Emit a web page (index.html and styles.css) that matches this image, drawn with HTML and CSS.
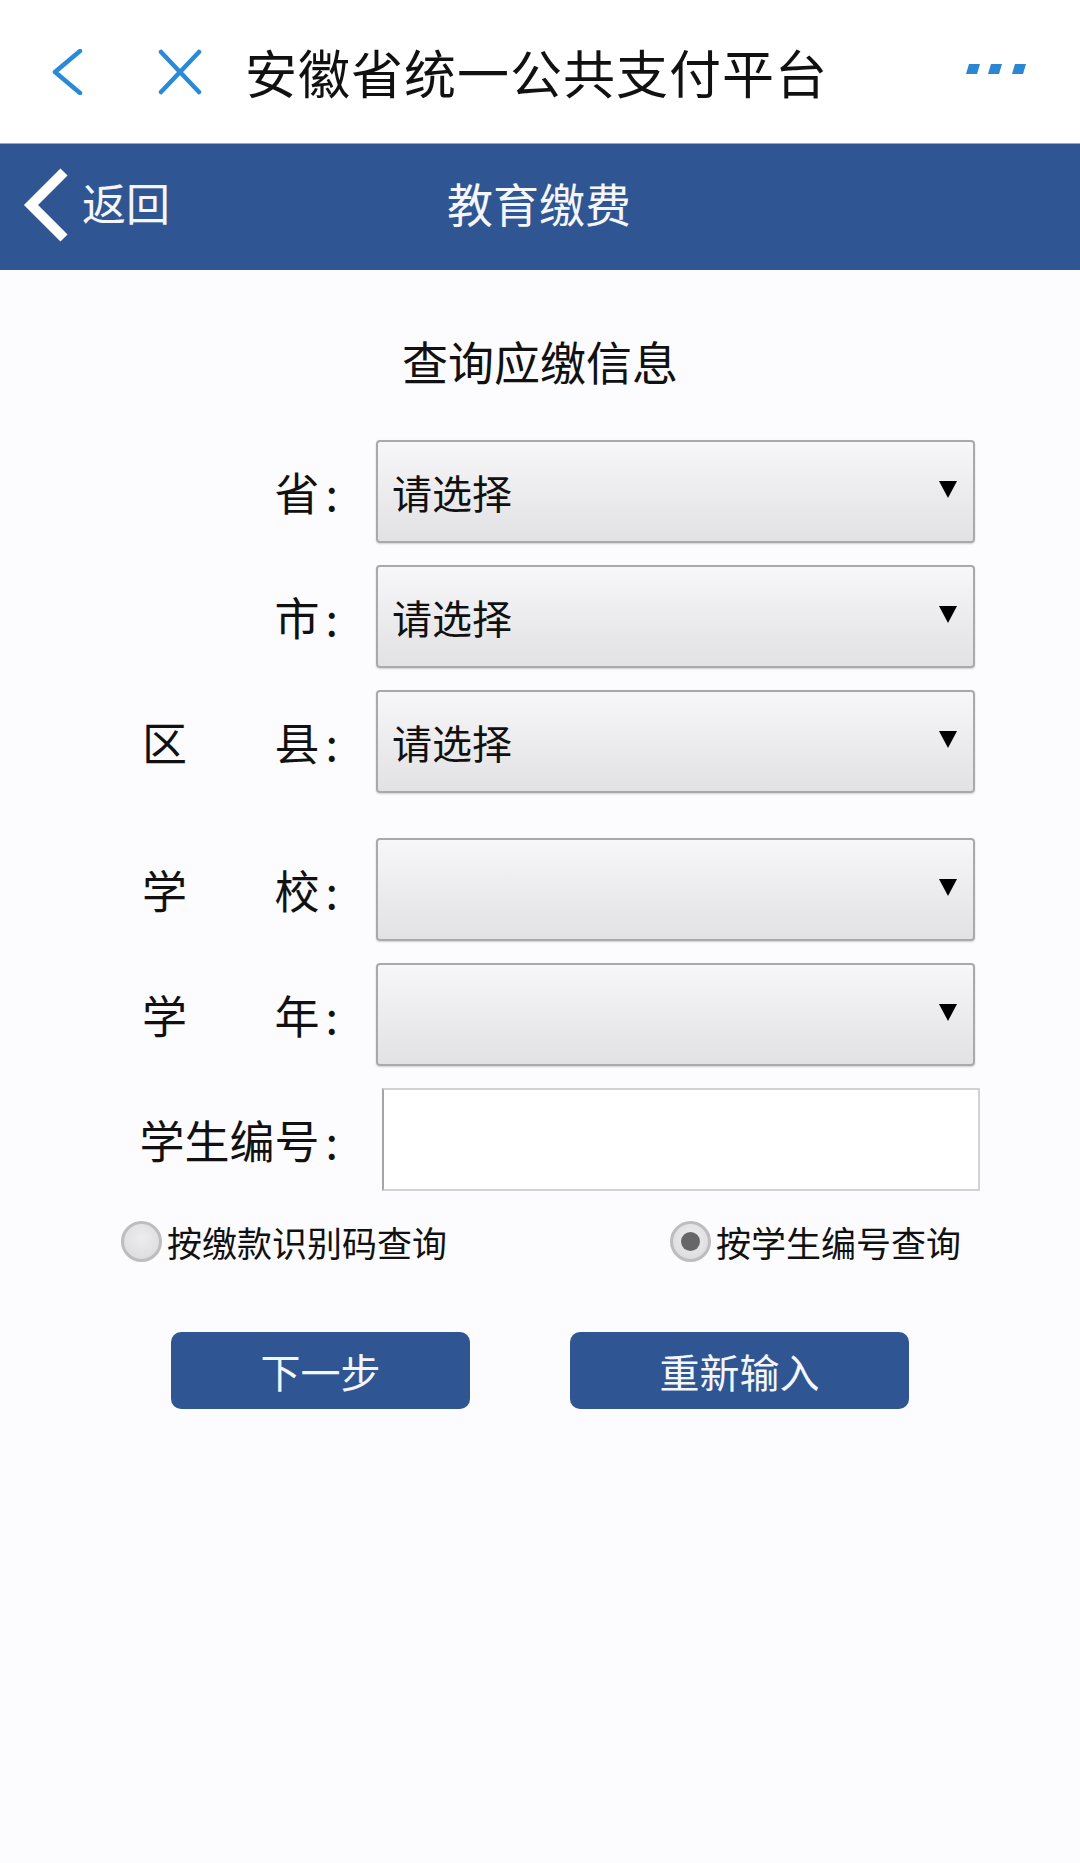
FILE: index.html
```html
<!DOCTYPE html>
<html lang="zh-CN">

<head>
    <meta charset="UTF-8">
    <meta name="viewport" content="width=device-width, initial-scale=1.0">
    <title>教育缴费</title>
    <link rel="stylesheet" href="styles.css">
</head>

<body>
    <header class="topbar">
        <span class="ico-back">
            <svg width="32" height="46" viewBox="0 0 32 46"><polyline points="29,2 4,23 29,44" fill="none" stroke="#2b8ad8" stroke-width="4.5" stroke-linecap="round" stroke-linejoin="round"/></svg>
        </span>
        <span class="ico-close">
            <svg width="44" height="46" viewBox="0 0 44 46"><path d="M3 3 L41 43 M41 3 L3 43" fill="none" stroke="#2b8ad8" stroke-width="4.5" stroke-linecap="round"/></svg>
        </span>
        <h1 class="app-title">安徽省统一公共支付平台</h1>
        <span class="ico-more">
            <svg width="62" height="10" viewBox="0 0 62 10"><polygon points="0,10 3,0 14,0 11,10" fill="#2b86d4"/><polygon points="22,10 25,0 36,0 33,10" fill="#2b86d4"/><polygon points="46,10 49,0 60,0 57,10" fill="#2b86d4"/></svg>
        </span>
    </header>

    <nav class="navbar">
        <a class="nav-back" href="#">
            <svg width="48" height="74" viewBox="0 0 48 74"><polyline points="42,4 9,37 42,70" fill="none" stroke="#fff" stroke-width="10"/></svg>
            <span>返回</span>
        </a>
        <h2 class="nav-title">教育缴费</h2>
        <span></span>
    </nav>

    <main class="form">
        <h3 class="form-title">查询应缴信息</h3>

        <div class="row">
            <label class="label">省<span class="colon">:</span></label>
            <div class="select"><span>请选择</span><i class="caret"></i></div>
        </div>
        <div class="row">
            <label class="label">市<span class="colon">:</span></label>
            <div class="select"><span>请选择</span><i class="caret"></i></div>
        </div>
        <div class="row">
            <label class="label spread"><span>区</span><span>县<span class="colon">:</span></span></label>
            <div class="select"><span>请选择</span><i class="caret"></i></div>
        </div>
        <div class="row row-gap">
            <label class="label spread"><span>学</span><span>校<span class="colon">:</span></span></label>
            <div class="select"><span></span><i class="caret"></i></div>
        </div>
        <div class="row">
            <label class="label spread"><span>学</span><span>年<span class="colon">:</span></span></label>
            <div class="select"><span></span><i class="caret"></i></div>
        </div>
        <div class="row row-input">
            <label class="label wide">学生编号<span class="colon">:</span></label>
            <input class="text-input" type="text">
        </div>

        <div class="radios">
            <label class="radio"><i class="dot"></i>按缴款识别码查询</label>
            <label class="radio checked"><i class="dot"></i>按学生编号查询</label>
        </div>

        <div class="buttons">
            <button class="btn btn-next">下一步</button>
            <button class="btn btn-reset">重新输入</button>
        </div>
    </main>
</body>

</html>
```

FILE: styles.css
```css
* {
    margin: 0;
    padding: 0;
    box-sizing: border-box;
}

body {
    width: 1080px;
    min-height: 1863px;
    background-color: #fcfcfe;
    font-family: "Noto Sans CJK SC", "Noto Sans", sans-serif;
    color: #111;
}

/* top app bar */
.topbar {
    height: 143px;
    background-color: #fff;
    display: flex;
    align-items: center;
    padding-left: 51px;
    padding-right: 52px;
}

.topbar svg {
    display: block;
}

.ico-close {
    margin-left: 75px;
}

.app-title {
    margin-left: 43px;
    font-size: 52px;
    font-weight: 400;
    line-height: 1;
    color: #111;
    letter-spacing: 1px;
}

.ico-more {
    margin-left: auto;
    margin-top: -6px;
}

/* blue nav */
.navbar {
    height: 127px;
    background-color: #2f5592;
    border-top: 1px solid #8fa9cc;
    display: grid;
    grid-template-columns: 1fr auto 1fr;
    align-items: center;
    padding-bottom: 10px;
    color: #f4f6fa;
}

.nav-back {
    display: flex;
    align-items: center;
    padding-left: 22px;
    color: #f4f6fa;
    text-decoration: none;
    font-size: 44px;
}

.nav-back svg {
    display: block;
    margin-right: 12px;
    margin-top: 6px;
}

.nav-title {
    font-size: 46px;
    font-weight: 400;
    margin-left: -2px;
}

/* form */
.form {
    padding-top: 62px;
}

.form-title {
    text-align: center;
    font-size: 46px;
    font-weight: 400;
    line-height: 56px;
    margin-bottom: 52px;
}

.row {
    display: flex;
    align-items: center;
    padding-left: 138px;
    margin-bottom: 22px;
}

.row-gap {
    margin-top: 45px;
}

.label {
    width: 200px;
    margin-right: 38px;
    font-size: 45px;
    text-align: right;
    line-height: 1;
    color: #111;
}

.colon {
    margin-left: 6px;
}

.label.spread {
    display: flex;
    justify-content: space-between;
    padding-left: 4px;
}

.label.wide {
    font-size: 45px;
    margin-right: 44px;
    white-space: nowrap;
}

.select {
    width: 599px;
    height: 103px;
    border: 2px solid #a9a9ab;
    border-radius: 4px;
    background: linear-gradient(#f7f7f9, #ececee 50%, #e2e2e4);
    box-shadow: 0 1px 2px rgba(0, 0, 0, 0.18);
    display: flex;
    align-items: center;
    justify-content: space-between;
    padding-left: 14px;
    padding-right: 16px;
    font-size: 40px;
    color: #111;
}

.caret {
    width: 0;
    height: 0;
    border-left: 9px solid transparent;
    border-right: 9px solid transparent;
    border-top: 17px solid #000;
    margin-top: -4px;
}

.text-input {
    width: 598px;
    height: 103px;
    border: 2px solid #d2d2d4;
    border-left-color: #a6a6a8;
    background-color: #fff;
    outline: none;
}

/* radios */
.radios {
    display: flex;
    align-items: center;
    padding-left: 121px;
    margin-top: 28px;
    height: 44px;
}

.radio {
    display: flex;
    align-items: center;
    font-size: 35px;
    line-height: 1;
    color: #111;
}

.radio.checked {
    margin-left: 223px;
}

.dot {
    width: 41px;
    height: 41px;
    border-radius: 50%;
    border: 3px solid #bdbdbf;
    background: radial-gradient(circle at 50% 40%, #ededef, #d9d9db);
    margin-right: 5px;
    display: flex;
    align-items: center;
    justify-content: center;
}

.radio.checked .dot::after {
    content: "";
    width: 19px;
    height: 19px;
    border-radius: 50%;
    background-color: #666;
}

/* buttons */
.buttons {
    display: flex;
    padding-left: 171px;
    margin-top: 69px;
}

.btn {
    height: 77px;
    border: none;
    border-radius: 10px;
    background-color: #2f5592;
    color: #f4f6fa;
    font-family: "Noto Sans CJK SC", "Noto Sans", sans-serif;
    font-size: 40px;
}

.btn-next {
    width: 299px;
}

.btn-reset {
    width: 339px;
    margin-left: 100px;
}
```
